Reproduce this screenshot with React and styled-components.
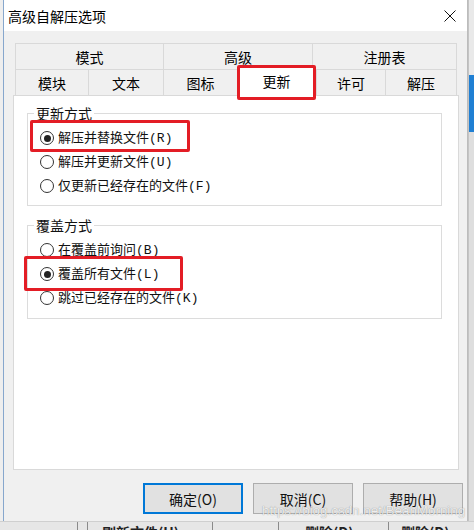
import React from "react";
import styled, { createGlobalStyle, css } from "styled-components";

const Global = createGlobalStyle`
  html, body { margin: 0; padding: 0; background: #ececec; }
  body { font-family: "Noto Sans CJK SC", "Noto Sans", sans-serif; color: #000; }
  * { box-sizing: border-box; }
`;

const Screen = styled.div`
  position: relative;
  width: 474px;
  height: 530px;
  overflow: hidden;
  display: grid;
  grid-template-columns: 3px 465px 6px;
  grid-template-rows: 521px 9px;
  background: #ececec;
`;

const LeftEdge = styled.div`
  background: #eeeeee;
`;

const RightEdge = styled.div`
  display: flex;
  flex-direction: column;
  border-left: 1px solid #c4c4c4;
  background: #e2e2e2;
`;

const EdgePart = styled.div`
  height: ${(p) => p.$h}px;
  flex: ${(p) => (p.$h ? "none" : "1")};
  background: ${(p) => p.$bg};
`;

const Window = styled.div`
  display: flex;
  flex-direction: column;
  background: #f0f0f0;
  border-left: 1px solid #87a7cd;
  border-right: 1px solid #bcbcbc;
`;

const TitleBar = styled.div`
  height: 31px;
  flex: none;
  background: #fff;
  display: flex;
  align-items: center;
  justify-content: space-between;
  padding: 0 11px 0 4px;
`;

const Title = styled.span`
  font-size: 14px;
  line-height: 18px;
  color: #000;
`;

const Body = styled.div`
  flex: 1;
  display: flex;
  flex-direction: column;
  padding: 12px 8px 7px 9px;
`;

const TabRow = styled.div`
  display: grid;
  grid-template-columns: ${(p) => p.$cols};
  height: 26px;
  margin: 0 2px;
`;

const Tab = styled.div`
  display: flex;
  align-items: center;
  justify-content: center;
  font-size: 14px;
  line-height: 18px;
  color: #000;
  background: #f0f0f0;
  border-top: 1px solid #d9d9d9;
  border-left: 1px solid #d9d9d9;
  &:last-child { border-right: 1px solid #d9d9d9; }
  ${(p) =>
    p.$active &&
    css`
      position: relative;
      z-index: 2;
      background: #fff;
      margin-top: -2px;
      margin-bottom: -1px;
      padding-bottom: 3px;
      border-right: 1px solid #d9d9d9;
      &::after {
        content: "";
        position: absolute;
        left: -1px;
        right: -1px;
        top: -3px;
        bottom: -4px;
        border: 3px solid #e31d25;
        border-radius: 2px;
      }
    `}
`;

const Panel = styled.div`
  height: 375px;
  flex: none;
  background: #fff;
  border: 1px solid #d9d9d9;
  padding: 8px 16px 0 13px;
  display: flex;
  flex-direction: column;
  gap: 10px;
`;

const Group = styled.fieldset`
  margin: 0;
  min-width: 0;
  border: 1px solid #dcdcdc;
  padding: ${(p) => p.$pad};
`;

const Legend = styled.legend`
  padding: 0 2px;
  font-size: 14px;
  line-height: 18px;
  color: #111;
`;

const Option = styled.div`
  position: relative;
  display: flex;
  align-items: center;
  width: fit-content;
  height: 24px;
  padding-left: 6px;
  gap: 4px;
  font-size: 13px;
  color: #111;
  ${(p) =>
    p.$mark &&
    css`
      &::after {
        content: "";
        position: absolute;
        left: ${p.$mark.l}px;
        right: ${p.$mark.r}px;
        top: ${p.$mark.t}px;
        bottom: ${p.$mark.b}px;
        border: 3px solid #e31d25;
        border-radius: 2px;
      }
    `}
`;

const Circle = styled.span`
  width: 14px;
  height: 14px;
  flex: none;
  border: 1px solid #333;
  border-radius: 50%;
  background: #fff;
  display: flex;
  align-items: center;
  justify-content: center;
  &::before {
    content: "";
    display: ${(p) => (p.$on ? "block" : "none")};
    width: 7px;
    height: 7px;
    border-radius: 50%;
    background: #222;
  }
`;

const Label = styled.span`
  line-height: 18px;
  white-space: nowrap;
`;

const Key = styled.span`
  font-family: "Liberation Mono", monospace;
  font-size: 13px;
`;

const ButtonRow = styled.div`
  display: flex;
  justify-content: flex-end;
  gap: 10px;
  margin-top: 13px;
  margin-right: -4px;
`;

const Button = styled.div`
  width: 100px;
  height: 31px;
  display: flex;
  align-items: center;
  justify-content: center;
  background: #e1e1e1;
  border: ${(p) => (p.$primary ? "2px solid #0078d7" : "1px solid #adadad")};
  font-size: 14px;
  color: #111;
`;

const Watermark = styled.div`
  position: absolute;
  left: 262px;
  top: 503px;
  font-family: "Liberation Sans", Arial, sans-serif;
  font-size: 13.4px;
  line-height: 16px;
  color: rgba(255, 255, 255, 0.85);
  text-shadow: 0 0 1px rgba(0, 0, 0, 0.45);
  pointer-events: none;
`;

const UnderStrip = styled.div`
  grid-column: 1 / -1;
  display: grid;
  grid-template-columns: 77px 10px 125px 66px 110px 1fr;
  overflow: hidden;
  background: #e6e6e6;
  border-top: 1px solid #cfcfcf;
`;

const UnderCell = styled.div`
  border-left: ${(p) => (p.$line ? "1px solid #8a8a8a" : "none")};
  padding-left: ${(p) => p.$pl || 0}px;
  padding-top: 1px;
  font-size: 14px;
  font-weight: 700;
  line-height: 18px;
  color: #222;
  white-space: nowrap;
`;

function Radio({ on, text, k, mark }) {
  return (
    <Option $mark={mark}>
      <Circle $on={on} />
      <Label>
        {text}
        <Key>({k})</Key>
      </Label>
    </Option>
  );
}

export default function App() {
  return (
    <>
      <Global />
      <Screen>
        <LeftEdge />
        <Window>
          <TitleBar>
            <Title>高级自解压选项</Title>
            <svg width="12" height="12" viewBox="0 0 12 12">
              <path d="M0.5 0.5 L11.5 11.5 M11.5 0.5 L0.5 11.5" stroke="#111" strokeWidth="1" fill="none" />
            </svg>
          </TitleBar>
          <Body>
            <TabRow $cols="148px 149px 145px">
              <Tab>模式</Tab>
              <Tab>高级</Tab>
              <Tab>注册表</Tab>
            </TabRow>
            <TabRow $cols="73px 75px 74px 79px 69px 72px">
              <Tab>模块</Tab>
              <Tab>文本</Tab>
              <Tab>图标</Tab>
              <Tab $active>更新</Tab>
              <Tab>许可</Tab>
              <Tab>解压</Tab>
            </TabRow>
            <Panel>
              <Group $pad="4px 6px 7px 6px">
                <Legend>更新方式</Legend>
                <Radio on text="解压并替换文件" k="R" mark={{ l: -4, r: -18, t: -6, b: -2 }} />
                <Radio text="解压并更新文件" k="U" />
                <Radio text="仅更新已经存在的文件" k="F" />
              </Group>
              <Group $pad="4px 6px 8px 6px">
                <Legend>覆盖方式</Legend>
                <Radio text="在覆盖前询问" k="B" />
                <Radio on text="覆盖所有文件" k="L" mark={{ l: -10, r: -24, t: -6, b: -5 }} />
                <Radio text="跳过已经存在的文件" k="K" />
              </Group>
            </Panel>
            <ButtonRow>
              <Button $primary>确定(O)</Button>
              <Button>取消(C)</Button>
              <Button>帮助(H)</Button>
            </ButtonRow>
          </Body>
        </Window>
        <RightEdge>
          <EdgePart $h={75} $bg="#e9e9e9" />
          <EdgePart $h={57} $bg="#1f7fd3" />
          <EdgePart $bg="#dedede" />
        </RightEdge>
        <UnderStrip>
          <UnderCell />
          <UnderCell $line />
          <UnderCell $line $pl={14}>刷新文件(U)</UnderCell>
          <UnderCell $line />
          <UnderCell $line $pl={26}>删除(D)</UnderCell>
          <UnderCell $line $pl={12}>删除(D)</UnderCell>
        </UnderStrip>
        <Watermark>https://blog.csdn.net/BeanMorning</Watermark>
      </Screen>
    </>
  );
}
